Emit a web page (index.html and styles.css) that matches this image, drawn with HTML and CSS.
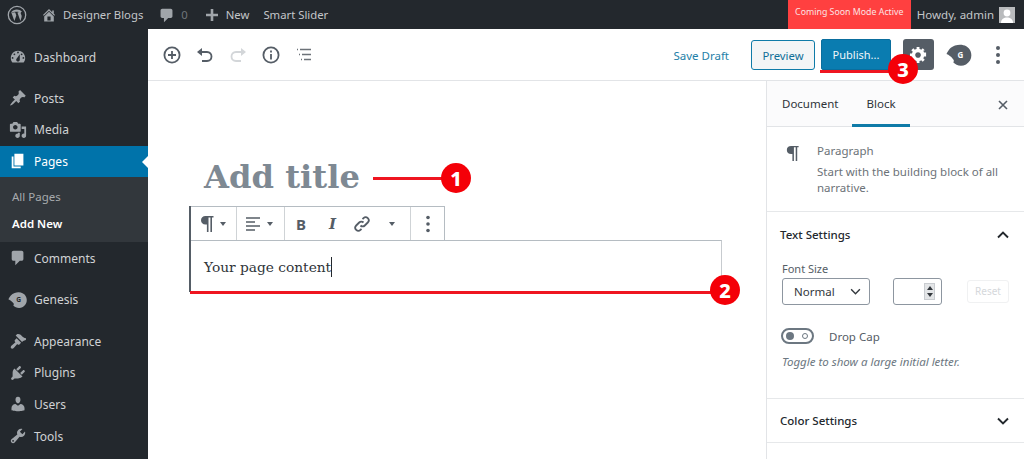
FILE: index.html
```html
<!DOCTYPE html>
<html lang="en">
<head>
<meta charset="utf-8">
<title>Add New Page</title>
<link rel="stylesheet" href="styles.css">
</head>
<body>
<div class="app">
  <header class="adminbar">
    <svg class="ab-wp" viewBox="0 0 20 20"><circle cx="10" cy="10" r="8.700" fill="none" stroke="currentColor" stroke-width="1.300"/><path d="M4.200 7.200l3.200 8.800 1.900-5.500-1-3h-.9V6.800h4v.7h-1l3 8.500 1-3.300c.5-1.600.2-2.500-.4-3.500-.5-.8-.5-2.200 1-2.400-2.800-3.200-8.300-3-10.800.4h2.400v.7z" fill="currentColor"/></svg>
    <svg class="ab-home" viewBox="0 0 20 20"><path d="M16 8.500l1.530 1.530-1.060 1.060L10 4.620l-6.470 6.470-1.060-1.060L10 2.500l4 4v-2h2v4zm-6-2.460l6 5.990V18H4v-5.970zM12 17v-5H8v5h4z"/></svg>
    <span class="ab-site">Designer Blogs</span>
    <svg class="ab-comment" viewBox="0 0 20 20"><path d="M5 2h10c1.100 0 2 .9 2 2v7c0 1.100-.9 2-2 2h-3l-5 5v-5H5c-1.100 0-2-.9-2-2V4c0-1.100.9-2 2-2z"/></svg>
    <span class="ab-count">0</span>
    <svg class="ab-plus" viewBox="0 0 12 12"><path d="M4.700 0h2.600v4.700H12v2.600H7.300V12H4.700V7.300H0V4.700h4.700z"/></svg>
    <span class="ab-new">New</span>
    <span class="ab-slider">Smart Slider</span>
    <span class="ab-soon">Coming Soon Mode Active</span>
    <span class="ab-howdy">Howdy, admin</span>
    <span class="ab-avatar"><svg viewBox="0 0 16 16"><circle cx="8" cy="6" r="3.400" fill="#fff"/><path d="M2 16c0-4 3-5.500 6-5.500s6 1.500 6 5.500z" fill="#fff"/></svg></span>
  </header>

  <div class="main">
    <nav class="sidebar">
      <a class="menu-item first"><svg viewBox="0 0 20 20"><path d="M3.760 16h12.480c1.100-1.370 1.760-3.110 1.760-5 0-4.420-3.580-8-8-8s-8 3.580-8 8c0 1.890.66 3.630 1.760 5zM10 4c.55 0 1 .45 1 1s-.45 1-1 1-1-.45-1-1 .45-1 1-1zM6 6c.55 0 1 .45 1 1s-.45 1-1 1-1-.45-1-1 .45-1 1-1zm8 0c.55 0 1 .45 1 1s-.45 1-1 1-1-.45-1-1 .45-1 1-1zm-5.370 5.550L12 7v6c0 1.100-.9 2-2 2s-2-.9-2-2c0-.57.24-1.080.63-1.450zM4 10c.55 0 1 .45 1 1s-.45 1-1 1-1-.45-1-1 .45-1 1-1zm12 0c.55 0 1 .45 1 1s-.45 1-1 1-1-.45-1-1 .45-1 1-1z"/></svg>Dashboard</a>
      <a class="menu-item gap"><svg viewBox="0 0 20 20"><path d="M10.440 3.020l1.820-1.820 6.360 6.350-1.830 1.820c-1.050-.68-2.480-.57-3.410.36l-.75.75c-.92.93-1.040 2.350-.35 3.410l-1.830 1.820-2.410-2.410-2.800 2.790c-.42.42-3.380 2.710-3.800 2.290s1.860-3.390 2.280-3.810l2.790-2.790L4.100 9.360l1.830-1.820c1.050.69 2.480.57 3.400-.36l.75-.75c.93-.92 1.050-2.350.36-3.410z"/></svg>Posts</a>
      <a class="menu-item"><svg viewBox="0 0 20 20"><path d="M13 11V4c0-.55-.45-1-1-1h-1.670L9 1H5L3.670 3H2c-.55 0-1 .45-1 1v7c0 .55.45 1 1 1h10c.55 0 1-.45 1-1zM7 4.500c1.380 0 2.500 1.120 2.500 2.500S8.380 9.500 7 9.500 4.500 8.380 4.500 7 5.620 4.500 7 4.500zM14 6h5v10.500c0 1.380-1.120 2.500-2.500 2.500S14 17.880 14 16.500s1.120-2.500 2.500-2.500c.17 0 .34.020.5.050V9h-3V6zm-4 8.050V13h2v3.500c0 1.380-1.120 2.500-2.500 2.500S7 17.880 7 16.500 8.120 14 9.500 14c.17 0 .34.020.5.050z"/></svg>Media</a>
      <a class="menu-item current"><svg viewBox="0 0 20 20"><path d="M6 15V2h10v13H6zm-1 1h8v2H3V5h2v11z"/></svg>Pages</a>
      <div class="submenu">
        <a class="sub-item">All Pages</a>
        <a class="sub-item active">Add New</a>
      </div>
      <a class="menu-item"><svg viewBox="0 0 20 20"><path d="M5 2h9c1.100 0 2 .9 2 2v7c0 1.100-.9 2-2 2h-2l-5 5v-5H5c-1.100 0-2-.9-2-2V4c0-1.100.9-2 2-2z"/></svg>Comments</a>
      <a class="menu-item gap-wide"><svg class="gen" viewBox="0 0 27 22"><path d="M.5 10C2.500 6 4.500 3 9 1.500c6-2 13-.5 15.500 5.500 2 5 .5 10.500-4.500 13.500-5 2.500-10 1-13-2.500 1.500-.5 1-2-.5-3.500C5 12.500 3 11 .5 10z"/><text x="14.500" y="14" class="gen-g">G</text></svg>Genesis</a>
      <a class="menu-item gap-wide"><svg viewBox="0 0 20 20"><path d="M14.480 11.060L7.410 3.990l1.500-1.500c.5-.56 2.300-.47 3.510.32 1.210.8 1.430 1.280 2.660 2.400 1.230 1.120 2.200 1.300 3.400 1.400.5.9.5 1.900.2 2.400-1 .3-2.200.5-2.900 1.100zm-1.040.99l-1.880 1.880c-.5.500-1.400.4-1.900-.1l-.5-.5-3.900 4.500c-.6.600-2.100 1.100-2.900.3s-.3-2.300.3-2.900l4.500-3.900-.5-.5c-.5-.5-.6-1.400-.1-1.900l1.880-1.880z"/></svg>Appearance</a>
      <a class="menu-item"><svg viewBox="0 0 20 20"><path d="M13.110 4.360L9.870 7.600 8 5.730l3.240-3.240c.35-.34 1.050-.2 1.560.32.52.51.66 1.210.31 1.550zm-8 1.770l.91-1.120 9.010 9.010-1.190.84c-.71.71-2.630 1.160-3.820 1.160H6.140L4.900 17.260c-.59.59-1.540.59-2.120 0-.59-.58-.59-1.530 0-2.120l1.240-1.240v-3.880c0-1.130.4-3.190 1.090-3.890zm7.260 3.970l3.240-3.240c.34-.35 1.040-.21 1.550.31.52.51.66 1.210.31 1.550l-3.240 3.250z"/></svg>Plugins</a>
      <a class="menu-item"><svg viewBox="0 0 20 20"><path d="M10 9.250c-2.270 0-2.730-3.440-2.730-3.440C7 4.020 7.820 2 9.970 2c2.160 0 2.980 2.020 2.710 3.810 0 0-.41 3.440-2.680 3.440zm0 2.570L12.720 10c2.390 0 4.520 2.330 4.520 4.530v2.490s-3.650 1.130-7.240 1.130c-3.650 0-7.240-1.130-7.240-1.130v-2.490c0-2.250 1.940-4.480 4.470-4.480z"/></svg>Users</a>
      <a class="menu-item"><svg viewBox="0 0 20 20"><path d="M16.680 9.770c-1.340 1.340-3.300 1.670-4.950.99l-5.410 6.520c-.99.99-2.590.99-3.580 0s-.99-2.590 0-3.570l6.520-5.420c-.68-1.650-.35-3.610.99-4.950 1.280-1.280 3.120-1.620 4.720-1.060l-2.890 2.890 2.820 2.820 2.860-2.870c.53 1.580.18 3.400-1.080 4.650zM3.810 16.210c.4.390 1.040.39 1.430 0 .4-.4.4-1.040 0-1.430-.39-.4-1.030-.4-1.430 0-.39.39-.39 1.030 0 1.430z"/></svg>Tools</a>
    </nav>

    <section class="editor">
      <div class="editor-head">
        <div class="tools">
          <svg viewBox="0 0 24 24" class="tool"><circle cx="12" cy="12" r="7.600"/><path d="M12 8v8M8 12h8"/></svg>
          <svg viewBox="0 0 24 24" class="tool"><path class="tip" d="M9 5v8L4 9z"/><path d="M8 9h6c6 0 6 9 0 9H9"/></svg>
          <svg viewBox="0 0 24 24" class="tool muted"><path class="tip" d="M15 5v8l5-4z"/><path d="M16 9h-6c-6 0-6 9 0 9h5"/></svg>
          <svg viewBox="0 0 24 24" class="tool"><circle cx="12" cy="12" r="7.600"/><path d="M12 11v5.500M12 7.500v2"/></svg>
          <svg viewBox="0 0 24 24" class="tool list"><path d="M5 6.500h1M8 6.500h11M7 11.500h1M10 11.500h9M9 16.500h1M12 16.500h7"/></svg>
        </div>
        <div class="actions">
          <a class="save">Save Draft</a>
          <button class="btn-preview">Preview</button>
          <button class="btn-publish">Publish...</button>
          <span class="btn-gear"><svg viewBox="0 0 20 20"><path d="M18 12h-2.180c-.17.7-.44 1.350-.81 1.930l1.540 1.540-2.100 2.100-1.540-1.540c-.58.36-1.230.64-1.910.81V19H8v-2.180c-.68-.17-1.330-.45-1.910-.81l-1.540 1.540-2.120-2.120 1.540-1.540c-.36-.58-.64-1.230-.81-1.910H1V9.030h2.170c.17-.7.44-1.350.81-1.930L2.440 5.560l2.120-2.120L6.100 4.980c.58-.36 1.230-.64 1.910-.81V2h3v2.170c.68.17 1.330.44 1.910.81l1.540-1.540 2.120 2.120L15 6.100c.36.58.64 1.230.81 1.910H18V12zm-8.500 1.500c1.660 0 3-1.340 3-3s-1.340-3-3-3-3 1.340-3 3 1.340 3 3 3z"/></svg></span>
          <svg class="head-gen" viewBox="0 0 27 22"><path d="M.5 10C2.500 6 4.500 3 9 1.500c6-2 13-.5 15.500 5.500 2 5 .5 10.500-4.500 13.500-5 2.500-10 1-13-2.500 1.500-.5 1-2-.5-3.500C5 12.500 3 11 .5 10z"/><text x="14.500" y="14" class="head-g">G</text></svg>
          <svg class="head-more" viewBox="0 0 6 20"><circle cx="3" cy="3" r="2"/><circle cx="3" cy="10" r="2"/><circle cx="3" cy="17" r="2"/></svg>
        </div>
      </div>

      <div class="editor-body">
        <div class="canvas">
          <h1 class="title">Add title</h1>
          <div class="block">
            <div class="block-toolbar">
              <div class="tb-group g1">
                <svg class="tb-para" viewBox="0 0 14 18"><path d="M5.500 1h8v1.500H12V17h-1.600V2.500H8.500V17H6.900V9.500H5.500C2.800 9.500 1 7.700 1 5.200S2.800 1 5.500 1z"/></svg>
                <i class="caret"></i>
              </div>
              <div class="tb-group g2">
                <svg class="tb-align" viewBox="0 0 14 14"><path d="M0 1h14M0 5h9M0 9h14M0 13h9"/></svg>
                <i class="caret"></i>
              </div>
              <div class="tb-group g3">
                <span class="tb-b">B</span>
                <span class="tb-i">I</span>
                <svg class="tb-link" viewBox="0 0 18 18"><path d="M7.500 10.500a3 3 0 0 0 4.300 0l3-3a3 3 0 0 0-4.300-4.300l-1 1M10.500 7.500a3 3 0 0 0-4.300 0l-3 3a3 3 0 0 0 4.300 4.300l1-1"/></svg>
                <i class="caret"></i>
              </div>
              <div class="tb-group g4">
                <svg class="tb-more" viewBox="0 0 4 18"><circle cx="2" cy="2.500" r="1.800"/><circle cx="2" cy="9" r="1.800"/><circle cx="2" cy="15.500" r="1.800"/></svg>
              </div>
            </div>
            <div class="block-body"><span class="block-text">Your page content</span><i class="cursor"></i></div>
          </div>
        </div>

        <aside class="inspector">
          <div class="tabs">
            <span class="tab">Document</span>
            <span class="tab on">Block</span>
            <svg class="tab-x" viewBox="0 0 10 10"><path d="M1 1l8 8M9 1l-8 8"/></svg>
          </div>
          <div class="card">
            <svg class="card-icon" viewBox="0 0 14 18"><path d="M5.500 1h8v1.500H12V17h-1.600V2.500H8.500V17H6.900V9.500H5.500C2.800 9.500 1 7.700 1 5.200S2.800 1 5.500 1z"/></svg>
            <div class="card-text">
              <div class="card-name">Paragraph</div>
              <p class="card-desc">Start with the building block of all narrative.</p>
            </div>
          </div>
          <div class="panel text-panel">
            <div class="panel-head"><span>Text Settings</span><svg class="chev" viewBox="0 0 12 8"><path d="M1 6.500l5-5 5 5"/></svg></div>
            <div class="fs-label">Font Size</div>
            <div class="fs-row">
              <div class="select">Normal<svg class="sel-chev" viewBox="0 0 12 8"><path d="M1 1.500l5 5 5-5"/></svg></div>
              <div class="number"><span class="spin"><i class="up"></i><i class="down"></i></span></div>
              <div class="reset">Reset</div>
            </div>
            <div class="drop-row">
              <span class="toggle"><i class="knob"></i><i class="ring"></i></span>
              <span class="drop-label">Drop Cap</span>
            </div>
            <p class="help">Toggle to show a large initial letter.</p>
          </div>
          <div class="panel color-panel">
            <div class="panel-head"><span>Color Settings</span><svg class="chev" viewBox="0 0 12 8"><path d="M1 1.500l5 5 5-5"/></svg></div>
          </div>
        </aside>
      </div>
    </section>
  </div>

  <div class="mark m1"><i class="m-line"></i><b class="m-dot">1</b></div>
  <div class="mark m2"><i class="m-line"></i><b class="m-dot">2</b></div>
  <div class="mark m3"><i class="m-line"></i><b class="m-dot">3</b></div>
</div>
</body>
</html>
```

FILE: styles.css
```css
* { box-sizing: border-box; }
html, body { margin: 0; padding: 0; }
body { background: #fff; font-family: "Noto Sans", "Open Sans", sans-serif; color: #23282d; }
.app { position: relative; width: 1024px; height: 459px; overflow: hidden; display: flex; flex-direction: column; }
p { margin: 0; }

/* admin bar */
.adminbar { height: 29px; flex: none; background: #23282d; color: #c3c6c9; display: flex; align-items: center; font-size: 11.3px; fill: #a0a5aa; }
.ab-wp { width: 20px; height: 20px; margin-left: 7px; color: #a0a5aa; }
.ab-home { width: 16px; height: 16px; margin-left: 14px; }
.ab-site { margin-left: 6px; }
.ab-comment { width: 17px; height: 17px; margin-left: 15px; margin-top: 2px; }
.ab-count { margin-left: 6px; color: #6f757b; }
.ab-plus { width: 12px; height: 12px; margin-left: 18px; }
.ab-new { margin-left: 8px; }
.ab-slider { margin-left: 14px; }
.ab-soon { margin-left: auto; width: 123px; height: 29px; background: #ff4040; color: #fbe3e3; font-size: 8.8px; text-align: center; padding-top: 6px; }
.ab-howdy { margin-left: 6px; font-size: 11.500px; }
.ab-avatar { width: 16px; height: 16px; margin: 0 9px 0 5px; background: #b9bbbd; display: block; overflow: hidden; }
.ab-avatar svg { display: block; }

/* layout */
.main { flex: 1; display: flex; min-height: 0; }
.sidebar { width: 148px; flex: none; background: #23282d; padding-top: 12.400px; }
.menu-item { height: 31.7px; display: flex; align-items: center; padding-left: 9px; font-size: 12px; color: #d0d2d4; fill: #a0a5aa; }
.menu-item svg { width: 18px; height: 18px; margin-right: 7px; flex: none; }
.menu-item svg.gen { width: 20px; margin-left: -1px; margin-right: 6px; }
.gen-g { font-size: 9px; fill: #23282d; text-anchor: middle; font-weight: 700; }
.menu-item.gap { margin-top: 9.100px; }
.menu-item.gap-wide { margin-top: 9.800px; }
.menu-item.current { position: relative; background: #0073aa; color: #fff; fill: #fff; }
.menu-item.current::after { content: ""; position: absolute; right: 0; top: 10px; border: 6px solid transparent; border-right-color: #fff; border-left: 0; }
.submenu { height: 65px; background: #32373c; padding-top: 6px; }
.sub-item { display: block; height: 27px; line-height: 27px; padding-left: 12px; font-size: 11.5px; color: #a7aaad; }
.sub-item.active { color: #fff; font-weight: 600; }

/* editor header */
.editor { flex: 1; min-width: 0; display: flex; flex-direction: column; }
.editor-head { height: 52px; flex: none; border-bottom: 1px solid #e2e4e7; display: flex; align-items: center; justify-content: space-between; }
.tools { display: flex; align-items: center; gap: 9px; padding-left: 12px; }
.tool { width: 24px; height: 24px; fill: none; stroke: #555d66; stroke-width: 1.800; }
.tool .tip { fill: #555d66; stroke: none; }
.tool.muted { stroke: #d3d6d9; }
.tool.muted .tip { fill: #d3d6d9; }
.tool.list { stroke-width: 1.300; stroke: #6c7278; }
.actions { display: flex; align-items: center; }
.save { font-size: 11.5px; color: #1e7fa8; margin-right: 22px; padding-top: 1px; }
.btn-preview { width: 64px; height: 30px; background: #f3f5f6; border: 1px solid #0f7ba8; border-radius: 3px; color: #0f6f98; font: 11.3px "Noto Sans", sans-serif; padding: 2px 0 0; margin-right: 6px; }
.btn-publish { width: 70px; height: 31px; background: #0a7cb0; border: 1px solid #0a6e9e; border-radius: 2px; color: #eef6fa; font: 11px "Noto Sans", sans-serif; padding: 0; margin-right: 12px; }
.btn-gear { width: 31px; height: 31px; background: #555d66; border-radius: 3px; display: flex; align-items: center; justify-content: center; fill: #fff; margin-right: 12px; }
.btn-gear svg { width: 19px; height: 19px; }
.head-gen { width: 27px; height: 22px; fill: #555d66; margin-right: 22px; }
.head-g { font-size: 8px; fill: #fff; text-anchor: middle; font-weight: 700; }
.head-more { width: 6px; height: 20px; fill: #555d66; margin-right: 23px; }

/* canvas */
.editor-body { flex: 1; display: flex; min-height: 0; }
.canvas { flex: 1; min-width: 0; padding: 74px 0 0 41px; }
.title { margin: 0 0 0 15px; font: 700 32.200px/44px "DejaVu Serif", serif; color: #7e8993; height: 51px; }
.block { width: 533px; border-left: 2px solid #555d66; }
.block-toolbar { display: flex; width: 254px; height: 34px; border: 1px solid #b5bcc2; border-left: 0; border-bottom: 0; }
.tb-group { display: flex; align-items: center; border-right: 1px solid #cfd3d6; height: 100%; }
.tb-group:last-child { border-right: 0; }
.g1 { width: 46px; padding-left: 9px; }
.g2 { width: 48px; padding-left: 9px; }
.g3 { width: 126px; padding-left: 11px; }
.g4 { flex: 1; justify-content: center; }
.tb-para { width: 14px; height: 18px; fill: #555d66; }
.tb-align { width: 14px; height: 14px; stroke: #555d66; stroke-width: 1.500; fill: none; }
.caret { width: 0; height: 0; border: 3px solid transparent; border-top: 4px solid #555d66; border-bottom: 0; margin-left: 6px; }
.g2 .caret { margin-left: 7px; }
.tb-b { font: 700 15px "Noto Sans", sans-serif; color: #555d66; }
.tb-i { font: italic 700 15px "DejaVu Serif", serif; color: #555d66; margin-left: 23px; }
.tb-link { width: 18px; height: 18px; fill: none; stroke: #555d66; stroke-width: 1.800; margin-left: 17px; }
.g3 .caret { margin-left: 18px; }
.tb-more { width: 4px; height: 18px; fill: #555d66; }
.block-body { height: 52px; border-top: 1px solid #b5bcc2; border-right: 1px solid #c7cbcf; display: flex; align-items: center; padding: 0 0 0 13px; }
.block-text { font: 13.750px "DejaVu Serif", serif; color: #2f3439; }
.cursor { display: block; width: 1px; height: 20px; background: #23282d; }

/* inspector */
.inspector { width: 258px; flex: none; border-left: 1px solid #e2e4e7; }
.tabs { height: 46px; display: flex; align-items: center; border-bottom: 1px solid #e2e4e7; background: #fbfbfc; font-size: 11.500px; color: #2f3439; position: relative; }
.tab { height: 46px; line-height: 46px; }
.tab:first-child { margin-left: 15px; }
.tab.on { margin-left: 28px; position: relative; }
.tab.on::after { content: ""; position: absolute; left: -14px; right: -14px; bottom: 0; height: 3px; background: #0f7ba8; }
.tab-x { position: absolute; left: 231px; top: 19px; width: 10px; height: 10px; stroke: #555d66; stroke-width: 1.600; fill: none; }
.card { height: 85px; border-bottom: 1px solid #e6e8ea; display: flex; padding: 17px 12px 0 18px; }
.card-icon { width: 15px; height: 17px; fill: #555d66; margin-top: 1px; flex: none; }
.card-text { margin-left: 17px; font-size: 11.500px; color: #6c7278; line-height: 16px; }
.card-name { margin-top: -1px; height: 21px; }
.panel { border-bottom: 1px solid #e6e8ea; }
.text-panel { height: 187px; }
.color-panel { height: 44px; }
.panel-head { display: flex; align-items: center; justify-content: space-between; padding: 0 15px 0 13px; height: 45px; font-size: 11.500px; font-weight: 500; color: #23282d; }
.color-panel .panel-head { height: 43px; }
.chev { width: 12px; height: 8px; fill: none; stroke: #23282d; stroke-width: 1.900; }
.fs-label { margin: 4px 0 0 15px; height: 16px; line-height: 16px; font-size: 11px; color: #555d66; }
.fs-row { display: flex; margin: 1px 0 0 15px; height: 27px; }
.select { width: 88px; height: 27px; border: 1px solid #8d96a0; border-radius: 3px; display: flex; align-items: center; justify-content: space-between; padding: 0 8px 0 11px; font-size: 11.500px; color: #32373c; }
.sel-chev { width: 11px; height: 7px; fill: none; stroke: #32373c; stroke-width: 1.600; }
.number { width: 49px; height: 27px; margin-left: 23px; border: 1px solid #8d96a0; border-radius: 3px; display: flex; align-items: center; justify-content: flex-end; padding-right: 6px; }
.spin { width: 11px; height: 17px; background: #e3e5e7; border: 1px solid #c9ccd0; display: flex; flex-direction: column; align-items: center; justify-content: space-around; }
.up { width: 0; height: 0; border: 3px solid transparent; border-top: 0; border-bottom: 4px solid #32373c; }
.down { width: 0; height: 0; border: 3px solid transparent; border-bottom: 0; border-top: 4px solid #32373c; }
.reset { width: 42px; height: 23px; margin: 2px 0 0 25px; border: 1px solid #f0f1f2; border-radius: 3px; text-align: center; font-size: 10px; line-height: 21px; color: #d5d8db; }
.drop-row { display: flex; align-items: center; margin: 23px 0 0 14px; height: 16px; }
.toggle { width: 33px; height: 16px; border: 2px solid #6c7781; border-radius: 8px; display: flex; align-items: center; justify-content: space-between; padding: 0 4px 0 3px; }
.knob { width: 8px; height: 8px; border-radius: 50%; background: #6c7781; }
.ring { width: 6px; height: 6px; border-radius: 50%; border: 1px solid #6c7781; }
.drop-label { margin-left: 15px; font-size: 11.500px; color: #555d66; }
.help { margin: 10px 0 0 15px; font-size: 11.500px; line-height: 16px; font-style: italic; color: #6c7781; }

/* callouts lying over the page */
.mark { position: absolute; display: flex; align-items: center; }
.m-line { display: block; height: 3px; background: #ef1520; }
.m-dot { width: 30px; height: 30px; margin-left: -1px; border-radius: 50%; background: #f40008; color: #fff; display: flex; align-items: center; justify-content: center; font: 800 20px "Noto Sans", sans-serif; }
.m1 { left: 373px; top: 163px; }
.m1 .m-line { width: 69px; }
.m2 { left: 190px; top: 275px; }
.m2 .m-line { width: 521px; margin-top: 4px; }
.m3 { left: 820px; top: 54px; }
.m3 .m-line { width: 69px; margin-top: 4px; }
```
